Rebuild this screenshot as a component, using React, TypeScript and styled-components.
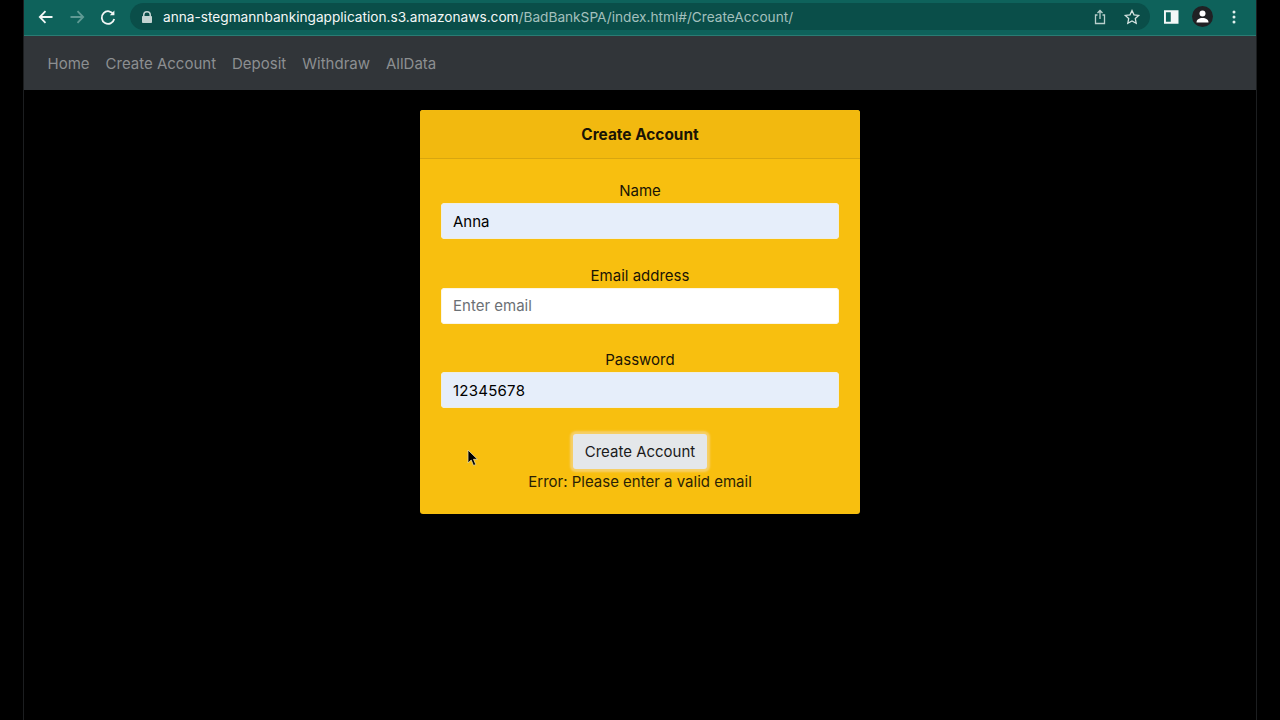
import React from 'react'
import styled, { createGlobalStyle } from 'styled-components'

const GlobalStyle = createGlobalStyle`
  html, body {
    margin: 0;
    height: 100%;
    background: #000;
    font-family: Inter, "Liberation Sans", sans-serif;
  }
`

const Screen = styled.div`
  width: 1232px;
  height: 720px;
  margin: 0 auto;
  display: flex;
  flex-direction: column;
  align-items: center;
  background: #000;
  box-shadow: -1px 0 0 #1c1e20, 1px 0 0 #1c1e20;
`

const BrowserBar = styled.div`
  align-self: stretch;
  flex: none;
  display: flex;
  align-items: center;
  padding: 0 10px 2px 9px;
  height: 33px;
  background: #0e625b;
  border-bottom: 1px solid #2a7c74;
`

const NavIcon = styled.svg<{ $dim?: boolean }>`
  width: 24px;
  height: 24px;
  flex: none;
  margin-right: 8px;
  fill: none;
  stroke: ${p => (p.$dim ? '#5f9a94' : '#f2f7f6')};
  stroke-width: 1.8;
`

const BackIcon = styled(NavIcon)`
  margin-left: 0.5px;
`

const ForwardIcon = styled(NavIcon)`
  margin-left: -1px;
`

const ReloadIcon = styled(NavIcon)`
  margin-right: 10px;
  margin-left: -0.5px;
`

const UrlPill = styled.div`
  width: 1020px;
  height: 27px;
  flex: none;
  display: flex;
  align-items: center;
  padding: 0 9px 0 12px;
  box-sizing: border-box;
  border-radius: 14px;
  background: #0a4e49;
`

const Lock = styled.svg`
  width: 10px;
  height: 12px;
  flex: none;
  margin-right: 11px;
  fill: #c3d4d2;
`

const Url = styled.div`
  flex: 1;
  font-size: 13.67px;
  color: #f4f7f7;
  white-space: nowrap;
`

const UrlPath = styled.span`
  color: #a3c0bd;
`

const PillIcon = styled.svg<{ $bright?: boolean }>`
  width: 18px;
  height: 18px;
  flex: none;
  margin-left: 14px;
  fill: none;
  stroke: ${p => (p.$bright ? '#d5e3e1' : '#b9cfcc')};
  stroke-width: 1.3;
`

const SidePanelIcon = styled.svg`
  width: 14.5px;
  height: 14px;
  flex: none;
  margin-left: 14px;
`

const Avatar = styled.div`
  width: 21px;
  height: 21px;
  flex: none;
  margin-left: 13.5px;
  border-radius: 50%;
  background: #202124;
  display: flex;
  align-items: center;
  justify-content: center;
`

const MenuDots = styled.svg`
  width: 4px;
  height: 14px;
  flex: none;
  margin-left: 19px;
  fill: #e2efed;
`

const NavBar = styled.nav`
  align-self: stretch;
  height: 54px;
  flex: none;
  display: flex;
  align-items: center;
  gap: 16px;
  padding: 0 23.5px;
  box-sizing: border-box;
  background: #313539;
`

const NavLink = styled.a`
  font-size: 15px;
  color: #8c8f91;
`

const Card = styled.div`
  width: 440px;
  margin-top: 20px;
  border-radius: 3px;
  overflow: hidden;
  background: #f8bf0f;
  color: #1a1405;
`

const CardHeader = styled.div`
  height: 48px;
  display: flex;
  align-items: center;
  justify-content: center;
  background: #f2b90f;
  border-bottom: 1px solid #d8a610;
  font-size: 15.4px;
  font-weight: 700;
`

const CardBody = styled.div`
  padding: 21px 21px 0;
  height: 354.5px;
  box-sizing: border-box;
  display: flex;
  flex-direction: column;
  align-items: center;
  font-size: 15px;
`

const FieldLabel = styled.label`
  height: 23px;
  line-height: 22px;
  text-align: center;
`

const Input = styled.div<{ $filled?: boolean; $digits?: boolean }>`
  align-self: stretch;
  height: 36px;
  flex: none;
  margin-bottom: 25.5px;
  padding: 0 12px;
  display: flex;
  align-items: center;
  border-radius: 4px;
  box-shadow: inset 0 0 0 1px ${p => (p.$filled ? '#efeee2' : '#fbf6e6')};
  letter-spacing: ${p => (p.$digits ? '0.25px' : 'normal')};
  background: ${p => (p.$filled ? '#e6eefa' : '#fff')};
  color: ${p => (p.$filled ? '#000' : '#6b7075')};
`

const SubmitButton = styled.button`
  width: 134px;
  height: 35px;
  flex: none;
  border: none;
  border-radius: 3px;
  background: #e4e7ea;
  box-shadow: 0 0 2px 3px #f6cf66;
  color: #1a1a1a;
  font: inherit;
  padding: 0;
`

const ErrorText = styled.div`
  margin-top: 1.5px;
  line-height: 23px;
  color: #2b1f05;
`

const Cursor = styled.svg`
  position: absolute;
  left: 467px;
  top: 449px;
  width: 12px;
  height: 18px;
`

export default function App() {
  return (
    <>
      <GlobalStyle />
      <Screen>
        <BrowserBar>
          <BackIcon viewBox="0 0 24 24">
            <path d="M18.500 12H6M11.500 6.200 5.800 12l5.700 5.800" />
          </BackIcon>
          <ForwardIcon $dim viewBox="0 0 24 24">
            <path d="M5.500 12H18M12.500 6.200l5.700 5.800-5.700 5.800" />
          </ForwardIcon>
          <ReloadIcon viewBox="0 0 24 24">
            <path d="M17.600 9.500A6.300 6.300 0 1 0 18.200 14" />
            <path d="M18.400 5.600v4.600h-4.600" fill="#f2f7f6" stroke="none" />
          </ReloadIcon>
          <UrlPill>
            <Lock viewBox="0 0 10 12">
              <path d="M1 5V3.800a4 3.800 0 0 1 8 0V5h.2c.4 0 .8.4.8.8v5.400c0 .4-.4.8-.8.8H.8c-.4 0-.8-.4-.8-.8V5.800c0-.4.4-.8.8-.8zm1.500 0h5V3.800a2.500 2.400 0 0 0-5 0z" />
            </Lock>
            <Url>
              anna-stegmannbankingapplication.s3.amazonaws.com<UrlPath>/BadBankSPA/index.html#/CreateAccount/</UrlPath>
            </Url>
            <PillIcon viewBox="0 0 18 18">
              <path d="M6.500 7H4.500v8.500h9V7h-2M9 11V2.500M6.500 5 9 2.500 11.500 5" />
            </PillIcon>
            <PillIcon $bright viewBox="0 0 18 18">
              <path d="m9 2.500 2 4.300 4.700.6-3.400 3.200.9 4.700L9 13l-4.200 2.300.9-4.700-3.400-3.200 4.700-.6z" />
            </PillIcon>
          </UrlPill>
          <SidePanelIcon viewBox="0 0 15 14">
            <path fill="#f4f8f7" fillRule="evenodd" d="M0 0h15v14H0zM2 2v10h5V2z" />
          </SidePanelIcon>
          <Avatar>
            <svg width="13" height="13" viewBox="0 0 13 13" fill="#fff">
              <circle cx="6.500" cy="3.500" r="3" />
              <path d="M0.500 12.500c0-3 2.500-4.500 6-4.500s6 1.500 6 4.500z" />
            </svg>
          </Avatar>
          <MenuDots viewBox="0 0 4 14">
            <circle cx="2" cy="2" r="1.500" />
            <circle cx="2" cy="7" r="1.500" />
            <circle cx="2" cy="12" r="1.500" />
          </MenuDots>
        </BrowserBar>
        <NavBar>
          <NavLink>Home</NavLink>
          <NavLink>Create Account</NavLink>
          <NavLink>Deposit</NavLink>
          <NavLink>Withdraw</NavLink>
          <NavLink>AllData</NavLink>
        </NavBar>
        <Card>
          <CardHeader>Create Account</CardHeader>
          <CardBody>
            <FieldLabel>Name</FieldLabel>
            <Input $filled>Anna</Input>
            <FieldLabel>Email address</FieldLabel>
            <Input>Enter email</Input>
            <FieldLabel>Password</FieldLabel>
            <Input $filled $digits>12345678</Input>
            <SubmitButton>Create Account</SubmitButton>
            <ErrorText>Error: Please enter a valid email</ErrorText>
          </CardBody>
        </Card>
      </Screen>
      <Cursor viewBox="0 0 12 18">
        <path d="M1 1v13l3.200-3 2.300 5.500 2.300-1-2.300-5.200H10.500z" fill="#000" stroke="#e8d9a0" strokeWidth="0.800" />
      </Cursor>
    </>
  )
}
